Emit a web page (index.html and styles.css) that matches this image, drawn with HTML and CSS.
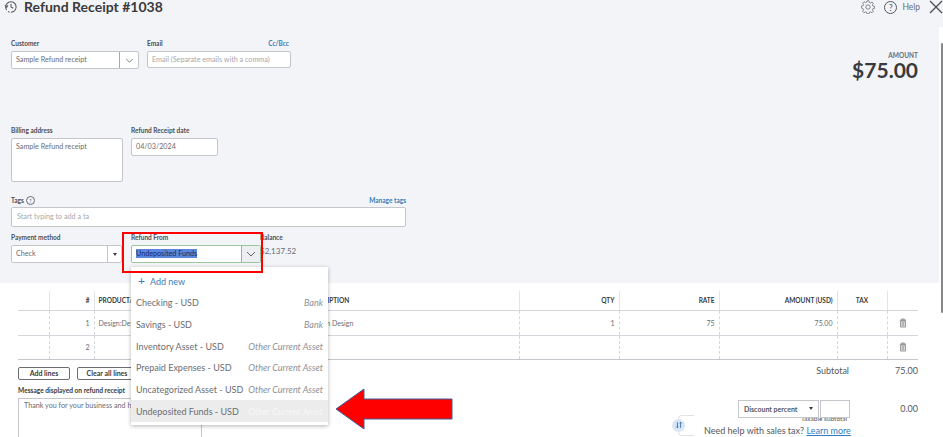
FILE: index.html
```html
<!DOCTYPE html>
<html lang="en">
<head>
<meta charset="utf-8">
<title>Refund Receipt #1038</title>
<link rel="stylesheet" href="styles.css">
</head>
<body>
<div class="page">
  <section class="top">
    <header class="header">
      <svg class="history" viewBox="0 0 16 16" width="14" height="14"><path d="M3 11.500A6 6 0 1 1 8 14M6.500 14a6 6 0 0 1-2-1" fill="none" stroke="#55575d" stroke-width="1.200"/><path d="M8 4.500V8l2.500 1.500" fill="none" stroke="#55575d" stroke-width="1.200"/><path d="M1 6l2 2.400L4.600 6" fill="none" stroke="#55575d" stroke-width="1.200"/></svg>
      <h1 class="title">Refund Receipt #1038</h1>
      <div class="tools">
        <svg class="gear" viewBox="0 0 14 14" width="14" height="14"><circle cx="7" cy="7" r="2.200" fill="none" stroke="#6b6c72" stroke-width=".8"/><path d="M6 .8h2l.3 1.700 1.200.5 1.500-1 1.400 1.400-1 1.500.5 1.200 1.700.3v2l-1.700.3-.5 1.200 1 1.500-1.400 1.400-1.500-1-1.200.5-.3 1.700H6l-.3-1.700-1.200-.5-1.500 1-1.400-1.400 1-1.500-.5-1.200L.4 8V6l1.700-.3.5-1.200-1-1.500L3 1.600l1.500 1 1.200-.5z" fill="none" stroke="#6b6c72" stroke-width=".8"/></svg>
        <span class="help-circle">?</span>
        <span class="help-text">Help</span>
        <svg class="close" viewBox="0 0 14 14" width="14" height="14"><path d="M1 1l12 12M13 1L1 13" stroke="#4a4b50" stroke-width="1.300" fill="none"/></svg>
      </div>
    </header>
    <div class="form">
      <div class="fields">
        <div class="row row-customer">
          <div class="field w-customer">
            <label class="label">Customer</label>
            <div class="combo h17"><span class="combo-text">Sample Refund receipt</span><span class="combo-btn"><svg viewBox="0 0 10 6" width="9" height="5"><path d="M1 1l4 4 4-4" fill="none" stroke="#55575d" stroke-width=".9"/></svg></span></div>
          </div>
          <div class="field w-email">
            <div class="label-row"><label class="label">Email</label><a class="link">Cc/Bcc</a></div>
            <div class="input h17 placeholder">Email (Separate emails with a comma)</div>
          </div>
        </div>
        <div class="row row-billing">
          <div class="field w-billing">
            <label class="label">Billing address</label>
            <div class="input area">Sample Refund receipt</div>
          </div>
          <div class="field w-date">
            <label class="label">Refund Receipt date</label>
            <div class="input h17">04/03/2024</div>
          </div>
        </div>
        <div class="field w-tags row-tags">
          <div class="label-row tags-label"><span class="tag-group"><label class="label">Tags</label><span class="tag-help">?</span></span><a class="link">Manage tags</a></div>
          <div class="input tags-input placeholder">Start typing to add a ta</div>
        </div>
        <div class="row row-payment">
          <div class="field w-payment">
            <label class="label">Payment method</label>
            <div class="combo h17"><span class="combo-text">Check</span><span class="caret-btn"><i class="caret"></i></span></div>
          </div>
          <div class="field w-refund">
            <label class="label">Refund From</label>
            <div class="combo h17 focused"><span class="combo-text"><span class="selected">Undeposited Funds</span></span><span class="combo-btn gray"><svg viewBox="0 0 10 6" width="10" height="6"><path d="M1 1l4 4 4-4" fill="none" stroke="#55575d" stroke-width=".9"/></svg></span></div>
          </div>
          <div class="balance">
            <div class="label">Balance</div>
            <div class="balance-value">$2,137.52</div>
          </div>
        </div>
      </div>
      <div class="amount">
        <div class="amount-label">AMOUNT</div>
        <div class="amount-value">$75.00</div>
      </div>
    </div>
  </section>

  <section class="bottom">
    <table class="lines">
      <colgroup><col class="c-drag"><col class="c-num"><col class="c-prod"><col class="c-desc"><col class="c-qty"><col class="c-rate"><col class="c-amt"><col class="c-tax"><col class="c-del"></colgroup>
      <thead><tr><th></th><th class="r">#</th><th>PRODUCT/SERVICE</th><th>DESCRIPTION</th><th class="r">QTY</th><th class="r">RATE</th><th class="r">AMOUNT (USD)</th><th class="c">TAX</th><th></th></tr></thead>
      <tbody>
        <tr class="row1"><td class="c"><span class="grip"></span></td><td class="r">1</td><td>Design:Design</td><td>Custom Design</td><td class="r">1</td><td class="r">75</td><td class="r">75.00</td><td></td><td class="c"><svg class="trash" viewBox="0 0 10 12" width="8" height="10"><path d="M1 2.500h8M3.500 2.500V1h3v1.500M2 3.500h6V11H2zM4 4.500V10M6 4.500V10" fill="none" stroke="#777" stroke-width="1"/></svg></td></tr>
        <tr class="row2"><td class="c"><span class="grip"></span></td><td class="r">2</td><td></td><td></td><td></td><td></td><td></td><td></td><td class="c"><svg class="trash" viewBox="0 0 10 12" width="8" height="10"><path d="M1 2.500h8M3.500 2.500V1h3v1.500M2 3.500h6V11H2zM4 4.500V10M6 4.500V10" fill="none" stroke="#777" stroke-width="1"/></svg></td></tr>
      </tbody>
    </table>
    <div class="lower">
      <div class="lower-left">
        <div class="buttons"><button class="btn b-add">Add lines</button><button class="btn b-clear">Clear all lines</button></div>
        <div class="msg-label">Message displayed on refund receipt</div>
        <div class="msg">Thank you for your business and have a great day!</div>
      </div>
      <div class="lower-right">
        <div class="total-row"><span class="sub-label">Subtotal</span><span class="sub-value">75.00</span></div>
        <div class="discount-row">
          <div class="disc-select"><span>Discount percent</span><i class="caret"></i></div>
          <div class="disc-input"></div>
          <span class="disc-value">0.00</span>
        </div>
        <div class="taxable">Taxable subtotal</div>
        <div class="tax-help">
          <span class="chat"><span class="bubble"><svg viewBox="0 0 10 10" width="8" height="8"><path d="M3 1.500v7M1.500 7L3 8.500 4.500 7M7 8.500v-7M5.500 3L7 1.500 8.500 3" fill="none" stroke="#2f6fb3" stroke-width="1.100"/></svg></span></span>
          <span class="need">Need help with sales tax? <a class="learn">Learn more</a></span>
        </div>
      </div>
    </div>
  </section>

  <div class="menu">
    <div class="menu-add"><span class="plus">+</span> Add new</div>
    <div class="item"><span>Checking - USD</span><em>Bank</em></div>
    <div class="item"><span>Savings - USD</span><em>Bank</em></div>
    <div class="item"><span>Inventory Asset - USD</span><em>Other Current Asset</em></div>
    <div class="item"><span>Prepaid Expenses - USD</span><em>Other Current Asset</em></div>
    <div class="item"><span>Uncategorized Asset - USD</span><em>Other Current Asset</em></div>
    <div class="item active"><span>Undeposited Funds - USD</span><em>Other Current Asset</em></div>
  </div>
  <div class="redbox"></div>
  <svg class="arrow" viewBox="0 0 118 42" width="118" height="42"><path d="M1 21L29 1v10h88v20H29v10z" fill="#f00" stroke="#3f5f9a" stroke-width="1"/></svg>
  <div class="scroll-strip"><div class="thumb"></div></div>
</div>
</body>
</html>
```
FILE: styles.css
```css
* { box-sizing: border-box; }
html, body { margin: 0; padding: 0; }
body { width: 943px; height: 437px; overflow: hidden; background: #fff; font-family: Lato, "Open Sans", "Liberation Sans", sans-serif; color: #6b6c72; }
.page { position: relative; width: 943px; height: 437px; overflow: hidden; display: flex; flex-direction: column; }
.top { height: 283px; background: #f3f4f8; flex: none; padding-left: 11px; }
.header { height: 14px; display: flex; align-items: center; margin-left: -7px; position: relative; }
.history { margin-right: 6px; flex: none; }
.title { margin: 0; font-size: 14px; font-weight: 700; color: #393a3d; line-height: 14px; }
.tools { margin-left: auto; display: flex; align-items: center; }
.gear { margin-right: 9px; }
.help-circle { width: 13px; height: 13px; border: 1px solid #55575d; border-radius: 50%; font-size: 9px; line-height: 11px; text-align: center; color: #55575d; margin-right: 5px; }
.help-text { font-size: 8.500px; color: #6b6c72; margin-right: 9px; }
.form { display: flex; justify-content: space-between; }
.fields { width: 395px; }
.row { display: flex; }
.field { display: flex; flex-direction: column; }
.label { font-size: 6.500px; line-height: 8px; font-weight: 700; color: #4d4e53; display: block; white-space: nowrap; }
.label-row { display: flex; justify-content: space-between; padding-right: 2px; }
.link { font-size: 6.500px; line-height: 8px; font-weight: 700; color: #3a7cb8; }
.input, .combo { background: #fff; border: 1px solid #c4c6cc; border-radius: 2px; font-size: 7.200px; color: #6b6c72; margin-top: 3px; }
.h17 { height: 18px; }
.input.h17 { padding: 0 4px; line-height: 16px; white-space: nowrap; overflow: hidden; }
.placeholder { color: #a6a7ab; }
.combo { display: flex; align-items: stretch; }
.combo-text { flex: 1; padding: 0 4px; line-height: 16px; white-space: nowrap; overflow: hidden; }
.combo-btn { width: 19px; border-left: 1px solid #a8a9ad; display: flex; align-items: center; justify-content: center; }
.combo-btn.gray { background: #eceef1; }
.caret-btn { width: 14px; border-left: 1px solid #c4c6cc; display: flex; align-items: center; justify-content: center; }
.caret { display: block; width: 0; height: 0; border: 2.500px solid transparent; border-top: 3px solid #393a3d; border-bottom: 0; }
.row-customer { margin-top: 26px; gap: 8px; height: 28px; }
.w-customer { width: 128px; }
.w-email { width: 144px; }
.row-billing { margin-top: 59px; gap: 8px; height: 55px; }
.w-billing { width: 112px; }
.w-date { width: 87px; }
.area { height: 48px; padding: 3px 4px; line-height: 9px; }
.row-tags { margin-top: 12px; }
.w-tags { width: 395px; }
.tags-label { padding-right: 0; align-items: center; height: 13px; }
.tag-group { display: flex; align-items: center; gap: 2px; }
.tag-help { width: 9px; height: 9px; border: 1px solid #6b6c72; border-radius: 50%; font-size: 6px; line-height: 7px; text-align: center; }
.tags-input { height: 20px; margin-top: 0; padding: 0 5px; line-height: 18px; }
.row-payment { margin-top: 7px; }
.w-payment { width: 111px; margin-right: 9px; }
.w-refund { width: 130px; }
.focused { border: 1.500px solid #9cc79c; }
.selected { background: #5b86e0; color: #1a2c5c; }
.balance { margin-left: -1px; }
.balance-value { font-size: 8px; color: #6b6c72; margin-top: 4px; line-height: 10px; }
.amount { margin: 38px 25px 0 0; text-align: right; }
.amount-label { font-size: 6.500px; line-height: 7px; font-weight: 700; color: #6b6c72; }
.amount-value { font-size: 21px; font-weight: 700; color: #393a3d; line-height: 22px; }
.bottom { flex: 1; padding: 8px 25px 0 18px; }
.lines { table-layout: fixed; border-collapse: collapse; width: 900px; font-size: 7px; }
.c-drag { width: 31px; } .c-num { width: 45px; } .c-prod { width: 208px; } .c-desc { width: 217px; }
.c-qty { width: 100px; } .c-rate { width: 100px; } .c-amt { width: 118px; } .c-tax { width: 50px; } .c-del { width: 31px; }
.lines th { height: 19px; font-size: 6.500px; font-weight: 700; color: #393a3d; text-align: left; padding: 0 4px; border-left: 1px solid #e3e4e7; border-bottom: 1px solid #d4d7dc; white-space: nowrap; overflow: hidden; }
.lines th:first-child, .lines td:first-child { border-left: 0; }
.lines td { padding: 0 4px; color: #6b6c72; border-left: 1px dashed #d4d7dc; border-bottom: 1px solid #d4d7dc; white-space: nowrap; overflow: hidden; }
.lines .r { text-align: right; }
.lines .c { text-align: center; }
.row1 td { height: 25px; }
.row2 td { height: 24px; }
.lines tbody tr:last-child td { border-bottom-color: #c4c6cc; }
.grip { display: inline-block; width: 6px; height: 6px; background-image: radial-gradient(circle, #9a9ba0 .6px, transparent .7px); background-size: 2px 2px; }
.trash { display: inline-block; vertical-align: middle; }
.lower { display: flex; justify-content: space-between; }
.lower-left { width: 184px; }
.buttons { display: flex; gap: 7px; margin-top: 7px; }
.btn { height: 13px; padding: 0; background: #fff; border: 1px solid #6b6c72; border-radius: 2px; font: 700 7px Lato, "Liberation Sans", sans-serif; color: #393a3d; }
.b-add { width: 52px; }
.b-clear { width: 60px; }
.msg-label { font-size: 6.600px; line-height: 8px; color: #393a3d; margin-top: 6px; font-weight: 700; white-space: nowrap; }
.msg { height: 50px; margin-top: 4px; border: 1px solid #c4c6cc; padding: 2px 5px; font-size: 7.200px; line-height: 9px; color: #6b6c72; white-space: nowrap; overflow: hidden; }
.lower-right { width: 240px; font-size: 9px; color: #55575d; }
.total-row { display: flex; justify-content: flex-end; margin-top: 5px; height: 12px; align-items: center; }
.sub-label { margin-right: 46px; }
.discount-row { display: flex; align-items: center; margin-top: 23px; height: 18px; margin-left: 60px; position: relative; z-index: 1; }
.disc-select { width: 81px; height: 18px; border: 1px solid #c4c6cc; background: #fff; display: flex; align-items: center; justify-content: space-between; padding: 0 5px; font-size: 7px; font-weight: 700; }
.disc-input { width: 30px; height: 18px; margin-left: 1px; border: 1px solid #c4c6cc; background: #fff; }
.disc-value { margin-left: auto; }
.taxable { font-size: 6.500px; line-height: 8px; height: 8px; margin-top: -3px; margin-left: 123px; color: #55575d; white-space: nowrap; }
.tax-help { display: flex; align-items: flex-end; margin-top: -8px; height: 21px; }
.chat { width: 16px; height: 21px; border: 1px solid #dfe3e8; border-right: 0; border-radius: 4px 0 0 4px; display: flex; align-items: center; flex: none; }
.bubble { width: 13px; height: 13px; border-radius: 50%; background: #d9e6f4; display: flex; align-items: center; justify-content: center; margin-left: -7px; flex: none; }
.need { margin-left: 10px; font-size: 9px; line-height: 10px; white-space: nowrap; }
.learn { color: #2f7cc0; text-decoration: underline; }
.menu { position: absolute; left: 131px; top: 267px; width: 197px; height: 158px; background: #fff; box-shadow: 0 1px 4px rgba(0,0,0,.3); padding-top: 3px; font-size: 9px; }
.menu-add { height: 22px; padding-left: 7px; line-height: 22px; color: #3a7cb8; }
.plus { font-size: 12px; margin-right: 3px; }
.item { height: 21.700px; padding: 0 5px; display: flex; align-items: center; justify-content: space-between; white-space: nowrap; color: #6b6c72; }
.item em { color: #8d9096; }
.item.active { background: #ececec; }
.item.active em { color: #f7f7f7; }
.redbox { position: absolute; left: 122px; top: 232px; width: 141px; height: 41px; border: 2px solid #f00; }
.arrow { position: absolute; left: 335px; top: 388px; }
.scroll-strip { position: absolute; left: 939px; top: 27px; width: 4px; height: 410px; background: #fff; }
.thumb { width: 2px; height: 270px; margin: 16px 0 0 2px; background: #888; border-radius: 1px; }
```
